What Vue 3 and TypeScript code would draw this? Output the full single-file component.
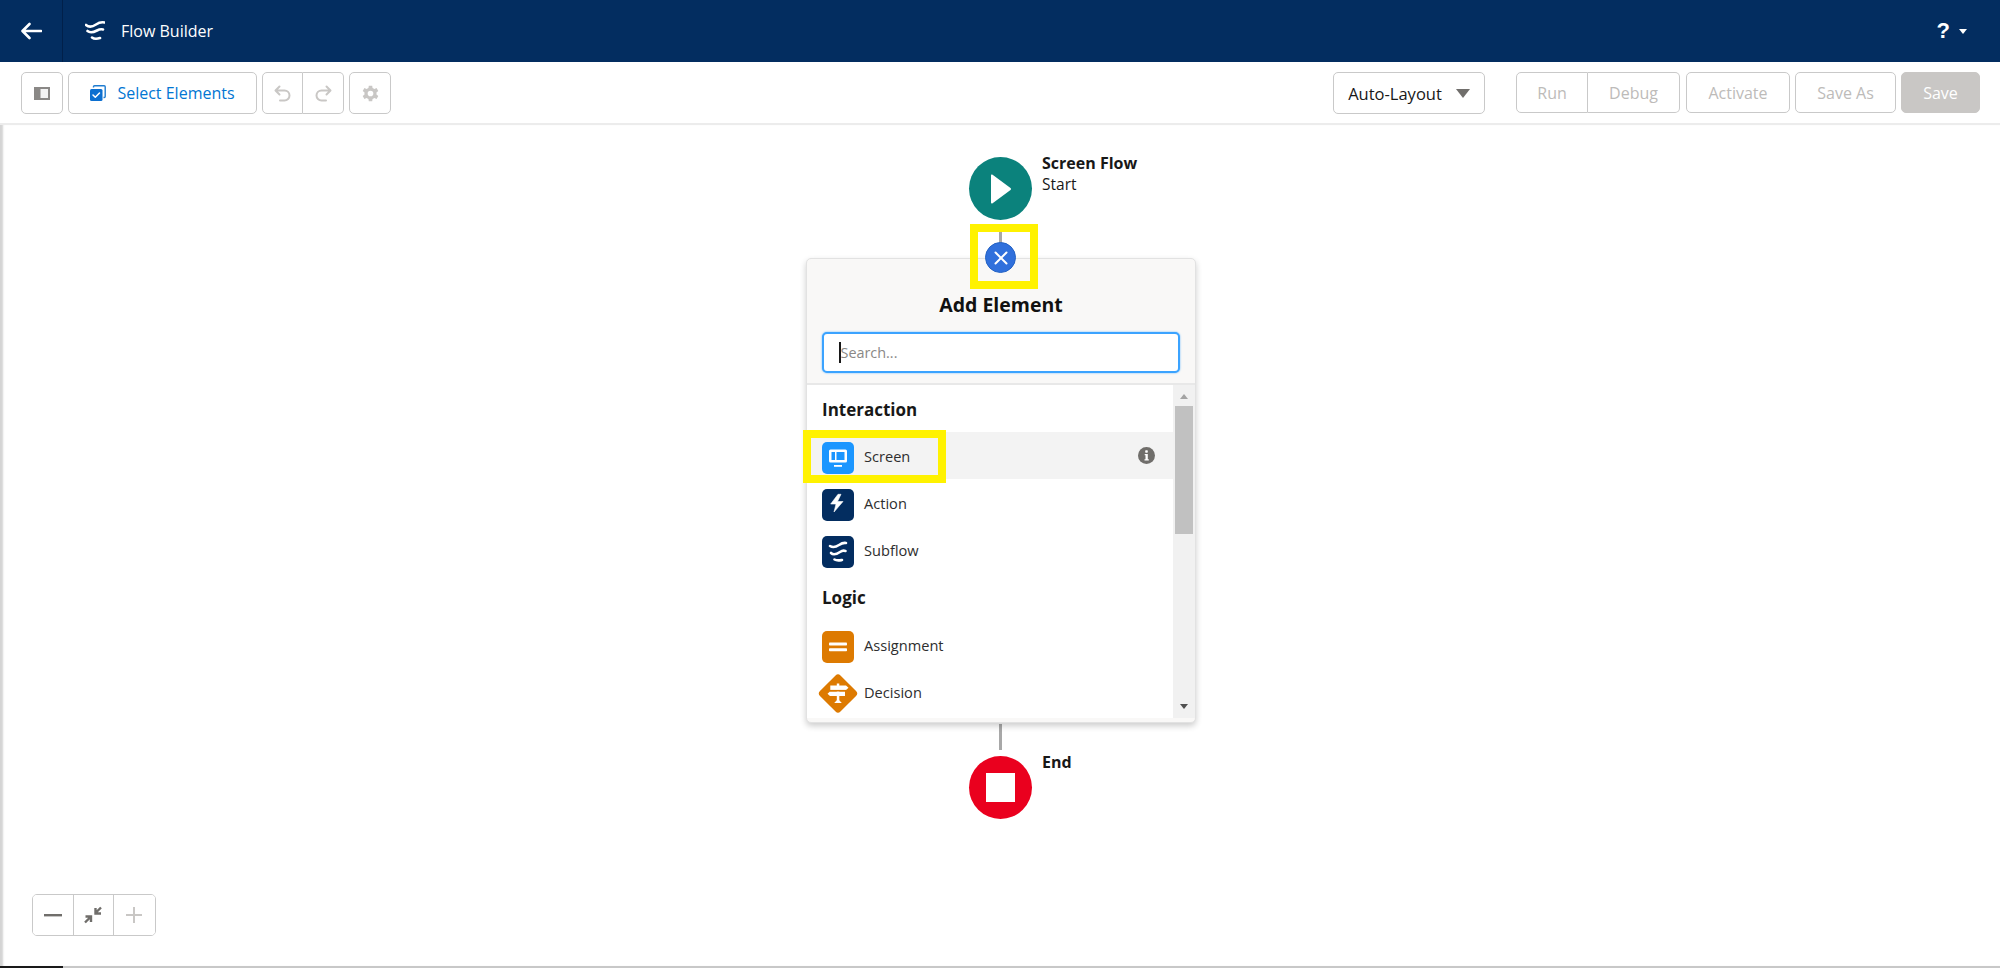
<script setup lang="ts">
interface PaletteItem {
  label: string
  icon: string
  active?: boolean
}

const interaction: PaletteItem[] = [
  { label: 'Screen', icon: 'screen', active: true },
  { label: 'Action', icon: 'action' },
  { label: 'Subflow', icon: 'subflow' },
]

const logic: PaletteItem[] = [
  { label: 'Assignment', icon: 'assignment' },
  { label: 'Decision', icon: 'decision' },
]

const sections = [
  { title: 'Interaction', items: interaction },
  { title: 'Logic', items: logic },
]
</script>

<template>
  <div class="builder">
    <header class="topbar">
      <button type="button" class="back" aria-label="Back">
        <svg width="22" height="18" viewBox="0 0 22 18">
          <path d="M9.5 2 2.5 9l7 7M3 9h18" fill="none" stroke="#fff" stroke-width="2.6" stroke-linecap="round" stroke-linejoin="round" />
        </svg>
      </button>
      <svg class="flow-logo" width="20" height="20" viewBox="0 0 20 20">
        <path d="M1 4C4 6.500 8 5.500 11 3.500S17 1 19.500 1.500M2.500 10C5 12 9 11 12 9.500S16 8 18 8.500M7 16.500C9 18 12 18 15 17" fill="none" stroke="#fff" stroke-width="2.600" stroke-linecap="round" />
      </svg>
      <span class="app-name">Flow Builder</span>
      <div class="help">
        <span class="help-mark">?</span>
        <span class="help-caret"></span>
      </div>
    </header>

    <div class="toolbar">
      <button type="button" class="tool icon-tool" aria-label="Toggle panel">
        <svg width="16" height="13" viewBox="0 0 16 13">
          <rect x="1" y="1" width="14" height="11" fill="#f3f3f3" stroke="#8a8886" stroke-width="2" />
          <rect x="1" y="1" width="5.500" height="11" fill="#8a8886" />
        </svg>
      </button>
      <button type="button" class="tool select-tool">
        <svg width="16" height="16" viewBox="0 0 16 16">
          <path d="M3.500 2.500V1.800a1 1 0 0 1 1-1h9.700a1 1 0 0 1 1 1v9.700a1 1 0 0 1-1 1h-.7" fill="none" stroke="#1f7cd0" stroke-width="1.400" />
          <rect x="0" y="4" width="12.500" height="12" rx="1.500" fill="#0b6fd0" />
          <path d="M3 10l2.300 2.300 4.200-4.300" fill="none" stroke="#fff" stroke-width="1.500" stroke-linecap="round" stroke-linejoin="round" />
        </svg>
        <span>Select Elements</span>
      </button>
      <div class="group history">
        <button type="button" class="tool seg" aria-label="Undo">
          <svg width="17" height="17" viewBox="0 0 17 17">
            <path d="M5.500 1.500 1.500 5.500l4 4M2 5.500h8.500a5 5 0 0 1 0 10H6" fill="none" stroke="#c9c7c5" stroke-width="2" stroke-linecap="round" stroke-linejoin="round" />
          </svg>
        </button>
        <button type="button" class="tool seg" aria-label="Redo">
          <svg width="17" height="17" viewBox="0 0 17 17">
            <path d="M11.500 1.500l4 4-4 4M15 5.500H6.500a5 5 0 0 0 0 10H11" fill="none" stroke="#c9c7c5" stroke-width="2" stroke-linecap="round" stroke-linejoin="round" />
          </svg>
        </button>
      </div>
      <button type="button" class="tool icon-tool gear" aria-label="Settings">
        <svg width="17" height="17" viewBox="0 0 24 24">
          <path d="M19.400 13.500c.1-.5.100-1 .1-1.500s0-1-.1-1.500l2.600-2-2.400-4.200-3.100 1.200c-.8-.6-1.600-1.100-2.600-1.400L13.400 1h-4.800l-.5 3.100c-.9.300-1.800.8-2.600 1.400L2.400 4.300 0 8.500l2.600 2c-.1.500-.1 1-.1 1.500s0 1 .1 1.500l-2.600 2 2.400 4.200 3.100-1.200c.8.600 1.700 1.100 2.600 1.400l.5 3.100h4.800l.5-3.100c.9-.3 1.800-.8 2.600-1.400l3.100 1.200 2.400-4.200zM11 16a4 4 0 1 1 0-8 4 4 0 0 1 0 8z" transform="translate(1)" fill="#c9c7c5" />
        </svg>
      </button>

      <div class="spacer"></div>

      <button type="button" class="tool layout-select">
        <span>Auto-Layout</span>
        <span class="select-caret"></span>
      </button>
      <div class="group run-group">
        <button type="button" class="tool seg run">Run</button>
        <button type="button" class="tool seg debug">Debug</button>
      </div>
      <button type="button" class="tool activate">Activate</button>
      <button type="button" class="tool save-as">Save As</button>
      <button type="button" class="tool save">Save</button>
    </div>

    <main class="canvas">
      <div class="connector connector-top"></div>
      <div class="connector connector-bottom"></div>

      <div class="node node-start">
        <svg width="30" height="34" viewBox="0 0 30 34">
          <path d="M5 3.500v27a1 1 0 0 0 1.600.8L24.500 18a1.300 1.300 0 0 0 0-2L6.600 2.700A1 1 0 0 0 5 3.500z" fill="#fff" />
        </svg>
      </div>
      <div class="node-label label-start">
        <strong>Screen Flow</strong>
        <span>Start</span>
      </div>

      <div class="node node-end"><span class="end-square"></span></div>
      <div class="node-label label-end"><strong>End</strong></div>

      <section class="panel">
        <div class="panel-head">
          <h2>Add Element</h2>
          <div class="search">
            <span class="search-caret"></span>
            <span class="search-hint">Search...</span>
          </div>
        </div>
        <div class="panel-body">
          <div class="list">
            <template v-for="section in sections" :key="section.title">
              <h3>{{ section.title }}</h3>
              <div v-for="item in section.items" :key="item.label" class="row" :class="{ active: item.active }">
                <span class="tile" :class="'tile-' + item.icon">
                  <svg v-if="item.icon === 'screen'" width="20" height="20" viewBox="0 0 20 20">
                    <rect x="1" y="1.500" width="18" height="13" rx="1.500" fill="#fff" />
                    <rect x="3.500" y="4" width="3.500" height="8" fill="#1b96ff" />
                    <rect x="8.500" y="4" width="8" height="8" fill="#1b96ff" />
                    <rect x="6" y="17" width="8" height="1.800" fill="#fff" />
                  </svg>
                  <svg v-else-if="item.icon === 'action'" width="20" height="24" viewBox="0 0 20 24">
                    <path d="M10 1.300 2.700 11H8L6 19 15 8.500H9.500L13 1.300z" fill="#fff" stroke="#fff" stroke-width=".6" stroke-linejoin="round" />
                  </svg>
                  <svg v-else-if="item.icon === 'subflow'" width="20" height="24" viewBox="0 0 20 24">
                    <path d="M2 6C5 8 8 7 11 5S15 2.500 18 3M3 13C5 15 9 14 12 12S15 10.500 17.500 11M6.500 19.500C9 21 11 20.500 14 20" fill="none" stroke="#fff" stroke-width="2.600" stroke-linecap="round" />
                  </svg>
                  <svg v-else-if="item.icon === 'assignment'" width="20" height="14" viewBox="0 0 20 14">
                    <rect x="1" y="2.500" width="18" height="3" rx=".8" fill="#fff" />
                    <rect x="1" y="8.300" width="18" height="3" rx=".8" fill="#fff" />
                  </svg>
                  <svg v-else width="40" height="41" viewBox="0 0 40 41">
                    <rect x="5.500" y="6" width="29" height="29" rx="3.500" transform="rotate(45 20 20.500)" fill="#dd7a01" />
                    <path d="M12.300 12.500H28L30.500 14.700 28 17H12.300zM9.500 20.700 12 18.500H27V23H12z" fill="#fff" />
                    <rect x="18.800" y="10.500" width="2.500" height="18" fill="#fff" />
                    <path d="M16.200 30H23.800L20 26z" fill="#fff" />
                    <path d="M12 17.700H28" stroke="#dd7a01" stroke-width="1.600" />
                  </svg>
                </span>
                <span class="row-label">{{ item.label }}</span>
                <span v-if="item.active" class="info">
                  <svg width="17" height="17" viewBox="0 0 17 17">
                    <circle cx="8.500" cy="8.500" r="8.500" fill="#706e6b" />
                    <rect x="7.200" y="3.300" width="2.600" height="2.400" rx=".6" fill="#fff" />
                    <path d="M6.700 7h3.100v5.200h1v1.300H6.500v-1.300h1V8.300h-.8z" fill="#fff" />
                  </svg>
                </span>
              </div>
            </template>
          </div>
          <div class="scrollbar">
            <span class="arrow-up"></span>
            <span class="thumb"></span>
            <span class="arrow-down"></span>
          </div>
        </div>
        <div class="panel-foot"></div>
      </section>

      <button type="button" class="close-add" aria-label="Close">
        <svg width="16" height="16" viewBox="0 0 16 16">
          <path d="M2.500 2.500l11 11M13.500 2.500l-11 11" stroke="#fff" stroke-width="2" stroke-linecap="round" />
        </svg>
      </button>

      <div class="mark mark-close"></div>
      <div class="mark mark-screen"></div>

      <div class="zoom-controls">
        <button type="button" aria-label="Zoom out">
          <svg width="18" height="3" viewBox="0 0 18 3"><rect width="18" height="2.400" fill="#706e6b" /></svg>
        </button>
        <button type="button" aria-label="Fit">
          <svg width="18" height="18" viewBox="0 0 18 18">
            <path d="M17 1.500 12 6.500M11.500 2v5.500H17M1 16.500 6 11.500M1.500 10.500H7V16" fill="none" stroke="#706e6b" stroke-width="2.400" />
          </svg>
        </button>
        <button type="button" aria-label="Zoom in">
          <svg width="18" height="18" viewBox="0 0 18 18"><path d="M9 1v16M1 9h16" stroke="#c9c7c5" stroke-width="2" /></svg>
        </button>
      </div>
    </main>
    <div class="taskbar"><span></span></div>
  </div>
</template>

<style>
html,
body {
  margin: 0;
  background: #fff;
}
</style>

<style scoped>
.builder {
  height: 968px;
  display: flex;
  flex-direction: column;
  overflow: hidden;
  font-family: 'Open Sans', 'Noto Sans', Arial, sans-serif;
  color: #181818;
}

button {
  font: inherit;
  padding: 0;
  background: #fff;
  cursor: pointer;
}

.topbar {
  flex: 0 0 62px;
  display: flex;
  align-items: center;
  background: #032d60;
  color: #fff;
}

.back {
  flex: 0 0 63px;
  height: 62px;
  border: 0;
  border-right: 1px solid #01204a;
  background: transparent;
  display: flex;
  align-items: center;
  justify-content: center;
  padding-right: 1px;
}

.flow-logo {
  margin-left: 22px;
}

.app-name {
  margin-left: 16px;
  font-size: 16px;
}

.help {
  margin-left: auto;
  margin-right: 33px;
  display: flex;
  align-items: center;
  gap: 9px;
}

.help-mark {
  font-size: 22px;
  font-weight: 700;
  font-family: 'Liberation Sans', sans-serif;
}

.help-caret {
  border: 4px solid transparent;
  border-top: 5px solid #fff;
  border-bottom: 0;
}

.toolbar {
  flex: 0 0 63px;
  box-sizing: border-box;
  display: flex;
  align-items: flex-start;
  padding: 10px 20px 0 21px;
  border-bottom: 2px solid #ececec;
}

.tool {
  box-sizing: border-box;
  height: 41px;
  border: 1px solid #c9c9c9;
  border-radius: 5px;
  display: flex;
  align-items: center;
  justify-content: center;
  font-size: 16px;
  color: #bdbbb9;
}

.icon-tool {
  width: 42px;
  height: 42px;
}

.select-tool {
  width: 189px;
  height: 42px;
  margin-left: 5px;
  gap: 11px;
  color: #0176d3;
}

.group {
  display: flex;
}

.seg {
  border-radius: 0;
}

.seg:first-child {
  border-radius: 5px 0 0 5px;
}

.seg:last-child {
  border-left: 0;
  border-radius: 0 5px 5px 0;
}

.history {
  margin-left: 5px;
}

.history .seg {
  height: 42px;
  width: 41px;
}

.gear {
  margin-left: 5px;
}

.spacer {
  flex: 1;
}

.layout-select {
  width: 152px;
  height: 42px;
  margin-right: 31px;
  gap: 14px;
  font-size: 16.500px;
  color: #181818;
}

.select-caret {
  border-style: solid;
  border-color: transparent;
  border-width: 9px 7px 0;
  border-top-color: #706e6b;
}

.run {
  width: 72px;
}

.debug {
  width: 92px;
}

.activate {
  width: 104px;
  margin-left: 6px;
}

.save-as {
  width: 101px;
  margin-left: 5px;
}

.save {
  width: 79px;
  margin-left: 5px;
  background: #c9c7c5;
  border-color: #c9c7c5;
  color: #fff;
}

.canvas {
  flex: 1;
  position: relative;
  box-shadow: inset 4px 0 2px -1px #d4d4d4;
}

.connector {
  position: absolute;
  left: 999px;
  width: 3px;
  background: #a8a8a8;
}

.connector-top {
  top: 107px;
  height: 12px;
}

.connector-bottom {
  top: 599px;
  height: 26px;
}

.node {
  position: absolute;
  left: 969px;
  width: 63px;
  height: 63px;
  border-radius: 50%;
  display: flex;
  align-items: center;
  justify-content: center;
}

.node-start {
  top: 32px;
  background: #0b827c;
}

.node-end {
  top: 631px;
  background: #ea001e;
}

.end-square {
  width: 29px;
  height: 29px;
  background: #fff;
}

.node-label {
  position: absolute;
  left: 1042px;
  display: flex;
  flex-direction: column;
  font-size: 16px;
  line-height: 21px;
  color: #181818;
}

.node-label span {
  font-size: 15.500px;
}

.label-start {
  top: 28px;
}

.label-end {
  top: 627px;
}

.panel {
  position: absolute;
  left: 806px;
  top: 133px;
  width: 390px;
  height: 465px;
  box-sizing: border-box;
  border: 1px solid #e2e2e2;
  border-radius: 5px;
  box-shadow: 0 3px 6px rgba(0, 0, 0, 0.2);
  background: #f9f8f7;
  display: flex;
  flex-direction: column;
}

.panel-head {
  height: 126px;
  box-sizing: border-box;
  border-bottom: 2px solid #e8e8e8;
  padding: 32px 15px 0;
}

.panel-head h2 {
  margin: 0 0 13px;
  font-size: 19.500px;
  line-height: 28px;
  font-weight: 700;
  text-align: center;
  color: #111;
}

.search {
  height: 41px;
  box-sizing: border-box;
  border: 2px solid #3ba3ff;
  border-radius: 5px;
  background: #fff;
  box-shadow: 0 0 2px #5fb4ff;
  display: flex;
  align-items: center;
  padding-left: 15px;
}

.search-caret {
  width: 1.500px;
  height: 21px;
  background: #181818;
}

.search-hint {
  font-size: 14.400px;
  color: #8a8886;
}

.panel-body {
  flex: 1;
  min-height: 0;
  display: flex;
  background: #fff;
}

.list {
  flex: 1;
  min-width: 0;
  overflow: hidden;
  position: relative;
}

h3 {
  margin: 0;
  height: 47px;
  padding: 13px 0 0 15px;
  box-sizing: border-box;
  font-size: 17px;
  line-height: 24px;
  font-weight: 700;
  color: #181818;
}

.row + h3 {
  height: 48px;
  padding-top: 13px;
}

.row {
  height: 47px;
  display: flex;
  align-items: center;
  padding: 0 18px 0 15px;
}

.row.active {
  background: #f3f3f3;
}

.tile {
  flex: 0 0 32px;
  min-width: 0;
  width: 32px;
  height: 32px;
  margin-top: 4px;
  border-radius: 5px;
  display: flex;
  align-items: center;
  justify-content: center;
}

.tile svg {
  flex: none;
}

.tile-screen {
  background: #1b96ff;
}

.tile-action,
.tile-subflow {
  background: #032d60;
}

.tile-assignment {
  background: #dd7a01;
}

.row-label {
  margin-left: 10px;
  font-size: 14.600px;
  color: #2e2e2e;
}

.info {
  margin-left: auto;
  display: flex;
}

.scrollbar {
  flex: 0 0 22px;
  background: #f1f1f1;
  display: flex;
  flex-direction: column;
  align-items: center;
  padding-top: 9px;
  box-sizing: border-box;
}

.arrow-up {
  border: 4.500px solid transparent;
  border-bottom: 5px solid #a3a3a3;
  border-top: 0;
}

.thumb {
  width: 18px;
  height: 128px;
  margin-top: 7px;
  background: #c1c1c1;
}

.arrow-down {
  margin-top: auto;
  margin-bottom: 9px;
  border: 4.500px solid transparent;
  border-top: 5px solid #505050;
  border-bottom: 0;
}

.panel-foot {
  flex: 0 0 4px;
}

.close-add {
  position: absolute;
  left: 985px;
  top: 117px;
  width: 31px;
  height: 31px;
  box-sizing: border-box;
  border: 1px solid #2563c4;
  border-radius: 50%;
  background: #3070dc;
  display: flex;
  align-items: center;
  justify-content: center;
}

.mark {
  position: absolute;
  box-sizing: border-box;
  border: 8px solid #fff200;
}

.mark-close {
  left: 970px;
  top: 99px;
  width: 68px;
  height: 65px;
}

.mark-screen {
  left: 803px;
  top: 305px;
  width: 143px;
  height: 53px;
}

.zoom-controls {
  position: absolute;
  left: 32px;
  top: 769px;
  display: flex;
  box-sizing: border-box;
  height: 42px;
  border: 1px solid #c9c9c9;
  border-radius: 5px;
  overflow: hidden;
}

.zoom-controls button {
  width: 40.500px;
  border: 0;
  border-right: 1px solid #c9c9c9;
  display: flex;
  align-items: center;
  justify-content: center;
}

.zoom-controls button:last-child {
  border-right: 0;
}

.taskbar {
  flex: 0 0 2px;
  background: #c8c8c8;
  display: flex;
}

.taskbar span {
  width: 63px;
  background: #1a1a1a;
}
</style>
